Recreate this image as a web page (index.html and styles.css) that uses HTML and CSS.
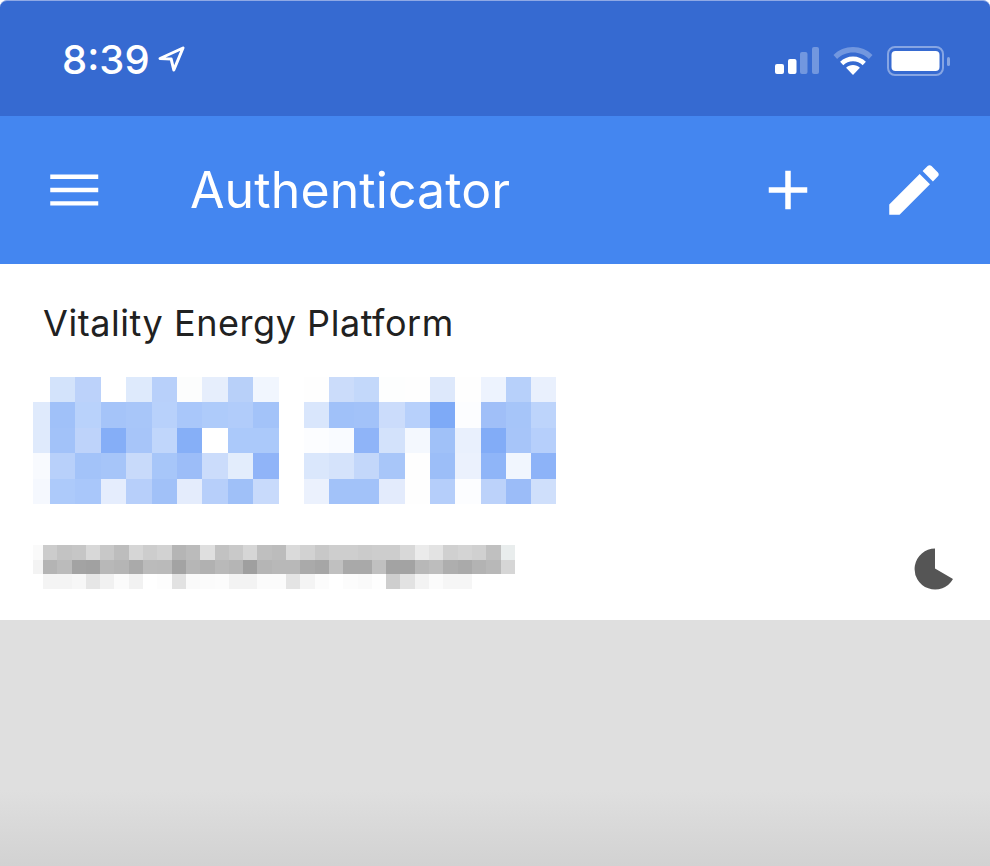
FILE: index.html
```html
<!DOCTYPE html>
<html lang="en">
<head>
<meta charset="UTF-8">
<meta name="viewport" content="width=device-width, initial-scale=1.0">
<title>Authenticator</title>
<link rel="stylesheet" href="styles.css">
</head>
<body>
<!-- Status bar -->
<div class="status-bar">
  <div class="status-left">
    <span class="clock">8:39</span>
    <svg class="location" viewBox="0 0 27 26"><path d="M25 2 2 12.5l11.2.6L15.8 24z" fill="none" stroke="#fff" stroke-width="3" stroke-linejoin="round"/></svg>
  </div>
  <div class="status-right">
    <svg class="signal" viewBox="0 0 44 27" fill="#fff">
      <rect x="0" y="17" width="9" height="10" rx="2"/>
      <rect x="13" y="12" width="8.5" height="15" rx="2"/>
      <rect x="25" y="5" width="7.5" height="22" rx="2" opacity=".3"/>
      <rect x="37" y="0" width="7" height="27" rx="2" opacity=".3"/>
    </svg>
    <svg class="wifi" viewBox="0 0 40 28" fill="#fff">
      <path d="M20 0C12.500 0 5.500 2.900.5 8l3.600 3.900C8.200 7.900 13.800 5.500 20 5.500s11.800 2.400 15.900 6.400L39.500 8C34.500 2.900 27.500 0 20 0z" opacity=".3"/>
      <path d="M20 9.500c-5 0-9.500 2-12.900 5.200l3.200 3.500c2.500-2.400 5.900-3.900 9.700-3.900s7.200 1.500 9.700 3.900l3.200-3.500C29.500 11.500 25 9.500 20 9.500z"/>
      <path d="M20 18c-2.700 0-5 1-6.900 2.700L20 28l6.900-7.300C25 19 22.700 18 20 18z"/>
    </svg>
    <svg class="battery" viewBox="0 0 63 30">
      <rect x="1" y="1" width="55" height="28" rx="7" fill="none" stroke="#fff" stroke-width="2" opacity=".4"/>
      <rect x="4.500" y="5" width="48" height="20" rx="4" fill="#fff"/>
      <rect x="60" y="11" width="3" height="9" rx="1.500" fill="#fff" opacity=".4"/>
    </svg>
  </div>
</div>

<!-- App bar -->
<div class="app-bar">
  <svg class="icon" viewBox="0 0 24 24"><path d="M3 6.360h17.450v1.600H3zm0 4.840h17.450v1.600H3zm0 4.850h17.450v1.600H3z"/></svg>
  <h1 class="app-title">Authenticator</h1>
  <svg class="icon" viewBox="0 0 24 24"><path d="M19 13h-6v6h-2v-6H5v-2h6V5h2v6h6v2z"/></svg>
  <svg class="icon" viewBox="0 0 24 24"><path d="M3 17.250V21h3.750L17.810 9.940l-3.750-3.750L3 17.250zM20.710 7.040c.39-.39.39-1.020 0-1.410l-2.340-2.340c-.39-.39-1.020-.39-1.410 0l-1.830 1.830 3.750 3.750 1.830-1.830z"/></svg>
</div>

<!-- Account -->
<div class="account">
  <div class="issuer">Vitality Energy Platform</div>
  <div class="code-mosaic" id="code_mosaic"></div>
  <div class="account-foot">
    <div class="name-mosaic" id="name_mosaic"></div>
    <svg class="timer" viewBox="0 0 42 42"><path d="M21 0.500A20.500 20.500 0 1 0 39 31L21 20.500z" fill="#555"/></svg>
  </div>
</div>

<div class="empty"></div>

<script>
// blurred out code and account name, one string per row
const codeRows = [
  "ffffff d3e3fb bcd2fa ffffff deeafc b8d0fa fcfdfd e6eefc b8d0f9 f1f6fe ffffff fefefe cbdcfa c3d8fa fdfefe fefefe dde8fb fefefe edf3fe b7d0fa e9f0fd",
  "dfeafc a0c1f9 b9d2fb a5c4f9 a8c6f9 b8d1fb a9c7fa aecbfa b1ccfa a3c3f9 ffffff d9e6fc a0c1f9 a2c2f9 cbdcfb b7d0fb 7eaaf7 fcfdff a0bff8 a6c5f9 bdd4fb",
  "dfeafc a2c2f9 bed3fa 85aef7 a7c5f9 c0d6fb 86aff7 ffffff abc9fa abc9fa ffffff fcfdff f9fbff 8fb4f8 d3e2fb f4f8fe a0c1f8 e9f0fd 82acf7 a7c5f9 b6cffb",
  "f8fafe b8d0fa a3c3f9 a6c5f9 c8dafa a7c6f9 9cbdf8 cbdcfb e3edfc 90b4f8 ffffff dae7fc d5e3fb c3d7fa a8c6f9 fefefe 9cbef8 ebf1fd 8fb5f8 f1f6fe 8db3f8",
  "f5f8fe adcafa a9c7fa e5edfd b7cffa a1c1f8 e4ecfc b7cffa 9fc0f8 c8dafb ffffff ebf1fd a2c2f9 a2c2f9 e3ebfc fefefe b5cefa fcfdff bcd2fa 9bbcf8 cfdffb"
];
const nameRows = [
  "fafafa cccccc c3c3c3 c6c6c6 d8d8d8 c8c8c8 bdbdbd d6d6d6 cdcdcd d2d2d2 b5b5b5 bbbbbb dfdfdf c2c2c2 c9c9c9 d6d6d6 bfbfbf bcbcbc dadada d2d2d2 c8c8c8 cecece cecece cbcbcb cdcdcd cdcdcd d8d8d8 ebebeb e3e3e3 d0d0d0 d4d4d4 d0d0d0 c0c0c0 e9eded",
  "f3f3f3 b4b4b4 bbbbbb a3a3a3 a1a1a1 b8b8b8 b5b5b5 aaaaaa bbbbbb bababa a3a3a3 b6b6b6 b1b1b1 b9b9b9 b5b5b5 9f9f9f b5b5b5 b8b8b8 b8b8b8 aaaaaa a6a6a6 c0c0c0 a9a9a9 a9a9a9 c0c0c0 a3a3a3 a3a3a3 b8b8b8 bdbdbd aeaeae aaaaaa b3b3b3 b8b8b8 d6d6d6",
  "ffffff f4f4f4 f4f4f4 f7f7f7 e6e6e6 f1f1f1 fbfbfb f2f2f2 ffffff fdfdfd e2e2e2 fafafa fbfbfb fcfcfc f3f3f3 f3f3f3 fbfbfb fbfbfb e4e4e4 f4f4f4 fcfcfc ffffff fcfcfc fafafa fefefe cecece e2e2e2 f3f3f3 fbfbfb f6f6f6 f6f6f6 ffffff ffffff ffffff"
];
function fillMosaic(box,rows){
  rows.forEach(r=>r.split(" ").forEach(c=>{
    const cell=document.createElement("span");
    cell.style.background="#"+c;
    box.appendChild(cell);
  }));
}
fillMosaic(code_mosaic,codeRows);
fillMosaic(name_mosaic,nameRows);
</script>
</body>
</html>
```

FILE: styles.css
```css
:root { --status:#366ad1; --bar:#4486f0; --empty:#dfdfdf; }
html,body{height:100%;}
body{margin:0;display:flex;flex-direction:column;background:#fff;font-family:Inter,"Liberation Sans",sans-serif;color:#212121;overflow:hidden;}

.status-bar{height:115px;flex:none;display:flex;justify-content:space-between;align-items:center;padding:0 40px 0 62px;background:var(--status);border-top:1px solid #8fa9e5;border-radius:7px 7px 0 0;}
.status-left{display:flex;align-items:center;gap:9px;margin-top:3px;}
.clock{font-size:40px;font-weight:500;line-height:46px;color:#fff;}
.location{width:27px;height:26px;margin-top:-2px;margin-left:-1px;}
.status-right{display:flex;align-items:center;gap:14px;margin-top:4px;}
.signal{width:44px;height:27px;}
.wifi{width:40px;height:28px;}
.battery{width:63px;height:30px;}

.app-bar{height:148px;flex:none;display:flex;align-items:center;padding:0 43px 0 42px;background:var(--bar);}
.app-bar .icon{width:66px;height:66px;fill:#fff;flex:none;}
.app-bar .icon + .icon{margin-left:60px;}
.app-title{flex:1;margin:0 0 0 82px;font-size:50px;font-weight:400;line-height:60px;letter-spacing:.1px;color:#fff;}

.account{height:356px;flex:none;background:#fff;box-sizing:border-box;padding-top:37px;}
.issuer{margin-left:43px;font-size:36px;line-height:44px;letter-spacing:.55px;}
.code-mosaic{display:grid;grid-template-columns:17px repeat(9,25.4px) 25px repeat(10,25.3px);grid-auto-rows:25.4px;width:max-content;margin:32px 0 0 33px;filter:blur(.7px);}
.account-foot{display:flex;justify-content:space-between;align-items:flex-start;margin-top:41px;padding:0 34px 0 33px;}
.name-mosaic{display:grid;grid-template-columns:10px repeat(33,14.3px);grid-auto-rows:14.6px;filter:blur(.7px);}
.timer{width:42px;height:42px;margin-top:3px;}

.empty{flex:1;background:linear-gradient(var(--empty) 0,var(--empty) 170px,#d2d2d2 100%);}
```
